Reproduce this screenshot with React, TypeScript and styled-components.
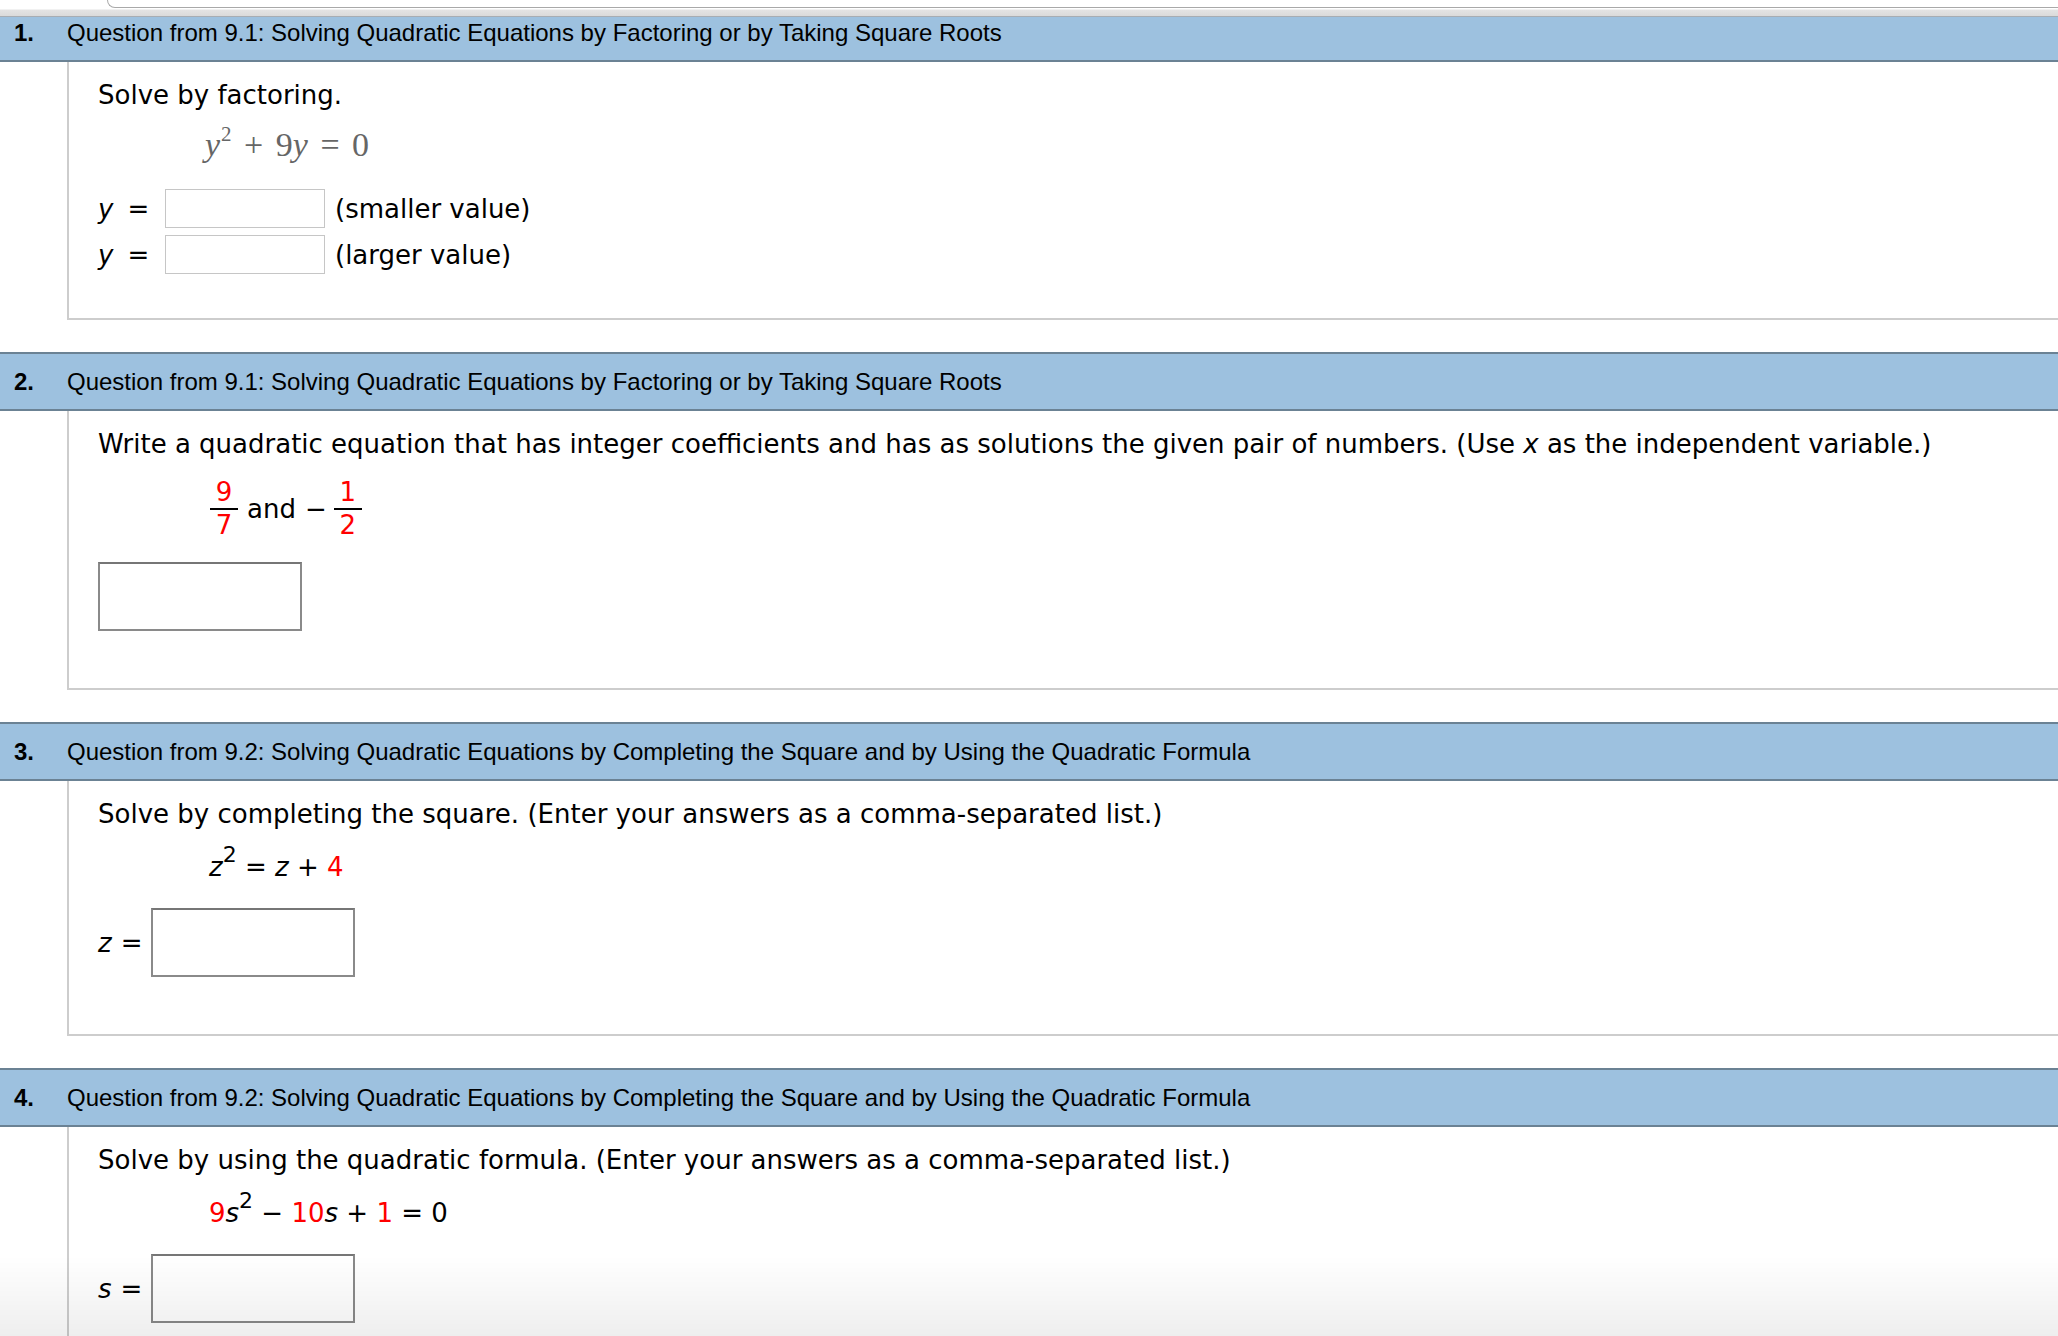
import styled, { createGlobalStyle } from "styled-components"
import { FC, ReactNode } from "react"

const GlobalStyle = createGlobalStyle`
  html, body {
    margin: 0;
    padding: 0;
    background: #fff;
  }
  body {
    font-family: "DejaVu Sans", Verdana, sans-serif;
    color: #000;
  }
`

interface QuestionProps {
  num: number
  title: string
  bottom: number
  children: ReactNode
}

const Question: FC<QuestionProps> = ({ num, title, bottom, children }) => {
  return <Section>
    <Header>
      <Num>{num}.</Num>
      <span>{title}</span>
    </Header>
    <Body $bottom={bottom}>
      {children}
    </Body>
  </Section>
}

const Frac: FC<{ top: string, bottom: string }> = ({ top, bottom }) => {
  return <FracBox>
    <span className="red">{top}</span>
    <span className="bar" />
    <span className="red">{bottom}</span>
  </FracBox>
}

const App = () => {
  return <>
    <GlobalStyle />
    <TopBar>
      <TopTab />
    </TopBar>
    <Page>
      <Question num={1} title="Question from 9.1: Solving Quadratic Equations by Factoring or by Taking Square Roots" bottom={44}>
        <Prompt>Solve by factoring.</Prompt>
        <TexEquation>
          <i>y</i><sup>2</sup> + 9<i>y</i> = 0
        </TexEquation>
        <Rows>
          <Row>
            <Label $width={67}><i>y</i><Eq $gap={14}>=</Eq></Label>
            <SmallInput />
            <Note>(smaller value)</Note>
          </Row>
          <Row>
            <Label $width={67}><i>y</i><Eq $gap={14}>=</Eq></Label>
            <SmallInput />
            <Note>(larger value)</Note>
          </Row>
        </Rows>
      </Question>

      <Question num={2} title="Question from 9.1: Solving Quadratic Equations by Factoring or by Taking Square Roots" bottom={57}>
        <Prompt>Write a quadratic equation that has integer coefficients and has as solutions the given pair of numbers. (Use <i>x</i> as the independent variable.)</Prompt>
        <FracRow>
          <Frac top="9" bottom="7" />
          <span className="and">and</span>
          <span className="minus">&minus;</span>
          <Frac top="1" bottom="2" />
        </FracRow>
        <BigInput $top={24} />
      </Question>

      <Question num={3} title="Question from 9.2: Solving Quadratic Equations by Completing the Square and by Using the Quadratic Formula" bottom={57}>
        <Prompt>Solve by completing the square. (Enter your answers as a comma-separated list.)</Prompt>
        <Equation>
          <i>z</i><sup>2</sup> = <i>z</i> + <Red>4</Red>
        </Equation>
        <AnswerRow>
          <Label $width={53}><i>z</i><Eq $gap={9}>=</Eq></Label>
          <BigInput $top={0} />
        </AnswerRow>
      </Question>

      <Question num={4} title="Question from 9.2: Solving Quadratic Equations by Completing the Square and by Using the Quadratic Formula" bottom={57}>
        <Prompt>Solve by using the quadratic formula. (Enter your answers as a comma-separated list.)</Prompt>
        <Equation>
          <Red>9</Red><i>s</i><sup>2</sup> &minus; <Red>10</Red><i>s</i> + <Red>1</Red> = 0
        </Equation>
        <AnswerRow>
          <Label $width={53}><i>s</i><Eq $gap={9}>=</Eq></Label>
          <BigInput $top={0} />
        </AnswerRow>
      </Question>
    </Page>
    <BottomShade />
  </>
}

export default App

const TopBar = styled.div`
  position: fixed;
  top: 0;
  left: 0;
  right: 0;
  height: 17px;
  z-index: 2;
  background: linear-gradient(#fff 0, #fff 9px, #e3e3e3 10px, #d9d9d9 17px);
  border-bottom: 1px solid #a7adb3;
  box-sizing: border-box;
`

const TopTab = styled.div`
  margin-left: 107px;
  height: 8px;
  background: #fff;
  border-left: 1px solid #a9a9a9;
  border-bottom: 1px solid #a9a9a9;
  border-bottom-left-radius: 8px;
  box-sizing: border-box;
`

const Page = styled.div`
  padding-top: 3px;
  display: flex;
  flex-direction: column;
  gap: 32px;
`

const Section = styled.div`
  display: flex;
  flex-direction: column;
`

const Header = styled.div`
  height: 55px;
  border-top: 2px solid #6b8294;
  border-bottom: 2px solid #6b8294;
  background: #9dc1df;
  display: flex;
  align-items: center;
  font-family: "Liberation Sans", Arial, sans-serif;
  font-size: 24px;
  color: #000;
`

const Num = styled.span`
  width: 67px;
  padding-left: 14px;
  box-sizing: border-box;
  font-weight: bold;
`

const Body = styled.div<{ $bottom: number }>`
  margin-left: 67px;
  border-left: 2px solid #cdcdcd;
  border-bottom: 2px solid #cdcdcd;
  padding: 17px 0 ${p => p.$bottom}px 29px;
  font-size: 26px;
  display: flex;
  flex-direction: column;
  align-items: flex-start;
`

const Prompt = styled.div`
  line-height: 32px;
`

const TexEquation = styled.div`
  margin-top: 16px;
  padding-left: 107px;
  line-height: 36px;
  font-family: "Liberation Serif", "DejaVu Serif", serif;
  font-size: 34px;
  color: #666;
  word-spacing: 4px;
  sup {
    font-size: 21px;
    line-height: 0;
    vertical-align: 15px;
    margin-left: 1px;
  }
`

const Equation = styled.div`
  margin-top: 19px;
  padding-left: 111px;
  line-height: 36px;
  sup {
    font-size: 22px;
    line-height: 0;
    vertical-align: 14px;
  }
`

const Red = styled.span`
  color: #f00;
`

const Rows = styled.div`
  margin-top: 26px;
  display: flex;
  flex-direction: column;
  gap: 7px;
`

const Row = styled.div`
  display: flex;
  align-items: center;
  height: 39px;
`

const Label = styled.span<{ $width: number }>`
  width: ${p => p.$width}px;
  display: inline-flex;
  align-items: center;
`

const Eq = styled.span<{ $gap: number }>`
  margin-left: ${p => p.$gap}px;
`

const SmallInput = styled.input`
  width: 160px;
  height: 39px;
  box-sizing: border-box;
  border: 1px solid #c6c6c6;
  background: #fff;
  margin: 0;
  padding: 0;
  outline: none;
`

const Note = styled.span`
  margin-left: 10px;
  line-height: 32px;
`

const FracRow = styled.div`
  margin-top: 19px;
  padding-left: 112px;
  display: flex;
  align-items: center;
  .and {
    margin-left: 9px;
  }
  .minus {
    margin-left: 9px;
    margin-right: 7px;
  }
`

const FracBox = styled.span`
  display: inline-flex;
  flex-direction: column;
  align-items: center;
  line-height: 26px;
  .red {
    color: #f00;
  }
  .bar {
    width: 28px;
    height: 2px;
    background: #000;
    margin: 3px 0 2px;
  }
`

const BigInput = styled.input<{ $top: number }>`
  margin: ${p => p.$top}px 0 0;
  width: 204px;
  height: 69px;
  box-sizing: border-box;
  border: 2px solid #8a8a8a;
  border-top-color: #767676;
  background: transparent;
  padding: 0;
  outline: none;
`

const AnswerRow = styled.div`
  margin-top: 23px;
  display: flex;
  align-items: center;
`

const BottomShade = styled.div`
  position: fixed;
  left: 0;
  right: 0;
  bottom: 0;
  height: 80px;
  pointer-events: none;
  background: linear-gradient(rgba(0, 0, 0, 0), rgba(0, 0, 0, 0.065));
`
